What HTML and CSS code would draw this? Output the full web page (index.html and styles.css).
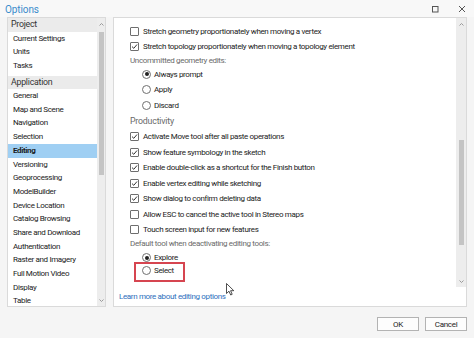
FILE: index.html
```html
<!doctype html>
<html lang="en">
  <head>
    <meta charset="UTF-8" />
    <meta name="viewport" content="width=device-width, initial-scale=1.0" />
    <title>Options</title>
    <link rel="stylesheet" href="styles.css">
  </head>
  <body>
    <div class="dialog">
      <div class="titlebar">
        <span class="title">Options</span>
        <div class="window-buttons">
          <svg width="8" height="8" viewBox="0 0 8 8"><rect x="1.5" y="1.5" width="5.5" height="5.5" fill="none" stroke="#555" /></svg>
          <svg width="8" height="8" viewBox="0 0 8 8"><path d="M1 1 L7 7 M7 1 L1 7" stroke="#555" stroke-width="1" /></svg>
        </div>
      </div>

      <div class="main">
        <!-- category list -->
        <div class="nav panel">
          <div class="nav-list">
            <div class="nav-header">Project</div>
            <div class="nav-item">Current Settings</div>
            <div class="nav-item">Units</div>
            <div class="nav-item">Tasks</div>
            <div class="nav-header nav-header-gap">Application</div>
            <div class="nav-item">General</div>
            <div class="nav-item">Map and Scene</div>
            <div class="nav-item">Navigation</div>
            <div class="nav-item">Selection</div>
            <div class="nav-item selected">Editing</div>
            <div class="nav-item">Versioning</div>
            <div class="nav-item">Geoprocessing</div>
            <div class="nav-item">ModelBuilder</div>
            <div class="nav-item">Device Location</div>
            <div class="nav-item">Catalog Browsing</div>
            <div class="nav-item">Share and Download</div>
            <div class="nav-item">Authentication</div>
            <div class="nav-item">Raster and Imagery</div>
            <div class="nav-item">Full Motion Video</div>
            <div class="nav-item">Display</div>
            <div class="nav-item">Table</div>
          </div>
          <div class="scrollbar scrollbar-narrow">
            <div class="arrow"><svg width="5" height="3" viewBox="0 0 5 3"><path d="M0.5 2.5 L2.5 0.5 L4.5 2.5" fill="none" stroke="#9a9a9a" /></svg></div>
            <div class="thumb" style="margin-top: 2px; height: 143px"></div>
            <div class="spacer"></div>
            <div class="arrow"><svg width="5" height="3" viewBox="0 0 5 3"><path d="M0.5 0.5 L2.5 2.5 L4.5 0.5" fill="none" stroke="#9a9a9a" /></svg></div>
          </div>
        </div>

        <!-- editing options -->
        <div class="content panel">
          <div class="content-body">
            <div class="scroll-area">
              <div class="row row-check"><span class="checkbox"></span>Stretch geometry proportionately when moving a vertex</div>
              <div class="row row-check"><span class="checkbox checked"><svg width="7" height="7" viewBox="0 0 7 7"><path d="M1 3.6 L2.8 5.3 L6 1.5" fill="none" stroke="#333" stroke-width="1" /></svg></span>Stretch topology proportionately when moving a topology element</div>
              <div class="note note-first">Uncommitted geometry edits:</div>
              <div class="row row-radio"><span class="radio on"></span>Always prompt</div>
              <div class="row row-radio"><span class="radio"></span>Apply</div>
              <div class="row row-radio"><span class="radio"></span>Discard</div>

              <div class="section-title">Productivity</div>
              <div class="row row-check"><span class="checkbox checked"><svg width="7" height="7" viewBox="0 0 7 7"><path d="M1 3.6 L2.8 5.3 L6 1.5" fill="none" stroke="#333" stroke-width="1" /></svg></span>Activate Move tool after all paste operations</div>
              <div class="row row-check"><span class="checkbox checked"><svg width="7" height="7" viewBox="0 0 7 7"><path d="M1 3.6 L2.8 5.3 L6 1.5" fill="none" stroke="#333" stroke-width="1" /></svg></span>Show feature symbology in the sketch</div>
              <div class="row row-check"><span class="checkbox checked"><svg width="7" height="7" viewBox="0 0 7 7"><path d="M1 3.6 L2.8 5.3 L6 1.5" fill="none" stroke="#333" stroke-width="1" /></svg></span>Enable double-click as a shortcut for the Finish button</div>
              <div class="row row-check"><span class="checkbox checked"><svg width="7" height="7" viewBox="0 0 7 7"><path d="M1 3.6 L2.8 5.3 L6 1.5" fill="none" stroke="#333" stroke-width="1" /></svg></span>Enable vertex editing while sketching</div>
              <div class="row row-check"><span class="checkbox checked"><svg width="7" height="7" viewBox="0 0 7 7"><path d="M1 3.6 L2.8 5.3 L6 1.5" fill="none" stroke="#333" stroke-width="1" /></svg></span>Show dialog to confirm deleting data</div>
              <div class="row row-check"><span class="checkbox"></span>Allow ESC to cancel the active tool in Stereo maps</div>
              <div class="row row-check"><span class="checkbox"></span>Touch screen input for new features</div>
              <div class="note note-default">Default tool when deactivating editing tools:</div>
              <div class="row row-radio row-tight"><span class="radio on"></span>Explore</div>
              <div class="row row-radio row-tight"><span class="radio"></span>Select</div>
            </div>
            <div class="scrollbar scrollbar-wide">
              <div class="arrow"><svg width="5" height="3" viewBox="0 0 5 3"><path d="M0.5 2.5 L2.5 0.5 L4.5 2.5" fill="none" stroke="#9a9a9a" /></svg></div>
              <div class="thumb" style="margin-top: 110px; height: 105px"></div>
              <div class="spacer"></div>
              <div class="arrow"><svg width="5" height="3" viewBox="0 0 5 3"><path d="M0.5 0.5 L2.5 2.5 L4.5 0.5" fill="none" stroke="#9a9a9a" /></svg></div>
            </div>
          </div>
          <div class="content-footer">
            <a class="help-link" href="#">Learn more about editing options</a>
          </div>

          <div class="highlight-box"></div>
          <svg class="cursor" width="9" height="13" viewBox="0 0 9 13">
            <path d="M0.5 0.5 L0.5 10.5 L3 8.2 L4.7 12 L6.2 11.3 L4.6 7.7 L7.8 7.7 Z" fill="#fff" stroke="#222" stroke-width="0.8" stroke-linejoin="round" />
          </svg>
        </div>
      </div>

      <div class="footer">
        <button class="button">OK</button>
        <button class="button">Cancel</button>
      </div>
    </div>
  </body>
</html>
```

FILE: styles.css
```css
* {
  margin: 0;
  padding: 0;
  box-sizing: border-box;
}

body {
  font-family: Roboto, "Noto Sans", sans-serif;
  font-size: 8px;
  letter-spacing: -0.35px;
  color: #1b1b1b;
  background: #f5f5f5;
}

.dialog {
  width: 474px;
  height: 338px;
  background: #f5f5f5;
  display: flex;
  flex-direction: column;
}

.titlebar {
  height: 17px;
  display: flex;
  align-items: center;
  justify-content: space-between;
  padding: 0 8px 0 5px;
  background: #f8f8f8;
}

.title {
  font-size: 10px;
  letter-spacing: -0.1px;
  color: #3a8ccc;
  margin-top: 2px;
}

.window-buttons {
  display: flex;
  gap: 19px;
  align-items: center;
  margin-top: 1px;
}

.main {
  display: flex;
  gap: 7px;
  height: 290px;
  margin: 0 7px;
}

.panel {
  background: #fff;
  border: 1px solid #dadada;
}

/* category list */

.nav {
  width: 99px;
  display: flex;
  overflow: hidden;
}

.nav-list {
  width: 89px;
  display: flex;
  flex-direction: column;
}

.nav-header {
  flex: none;
  height: 13.5px;
  line-height: 13.5px;
  padding-left: 3px;
  font-size: 8.8px;
  letter-spacing: -0.25px;
  color: #333;
  background: #ebebeb;
}

.nav-header-gap {
  margin-top: 3px;
}

.nav-item {
  flex: none;
  height: 13.7px;
  line-height: 13.7px;
  padding-left: 5px;
  white-space: nowrap;
}

.nav-item.selected {
  background: #9fcff3;
  font-weight: 700;
}

/* scrollbars */

.scrollbar {
  display: flex;
  flex-direction: column;
  align-items: center;
  background: #ededed;
}

.scrollbar-narrow {
  width: 8px;
}

.scrollbar-wide {
  width: 10px;
}

.arrow {
  height: 12px;
  display: flex;
  align-items: center;
  justify-content: center;
}

.thumb {
  width: 5px;
  background: #c4c4c4;
  flex: none;
}

.spacer {
  flex: 1;
}

/* editing options */

.content {
  width: 354px;
  display: flex;
  flex-direction: column;
  position: relative;
}

.content-body {
  height: 269px;
  display: flex;
}

.scroll-area {
  flex: 1;
  padding-top: 5.25px;
  overflow: hidden;
}

.row {
  display: flex;
  align-items: center;
  height: 15.5px;
  white-space: nowrap;
}

.row-check {
  padding-left: 16px;
}

.row-radio {
  padding-left: 28px;
}

.row-tight {
  height: 13px;
}

.checkbox {
  width: 9px;
  height: 9px;
  border: 1px solid #6e6e6e;
  border-radius: 1px;
  background: #fff;
  margin-right: 4px;
  display: flex;
  align-items: center;
  justify-content: center;
}

.radio {
  width: 9px;
  height: 9px;
  border: 1px solid #707070;
  border-radius: 50%;
  background: #fff;
  margin-right: 3px;
  display: flex;
  align-items: center;
  justify-content: center;
}

.radio.on::after {
  content: "";
  width: 4px;
  height: 4px;
  border-radius: 50%;
  background: #222;
}

.note {
  padding-left: 16px;
  color: #6a6a6a;
  white-space: nowrap;
}

.note-first {
  height: 10px;
  line-height: 10px;
  margin-top: 2px;
}

.note-default {
  height: 14px;
  line-height: 14px;
}

.section-title {
  height: 16px;
  line-height: 16px;
  padding-left: 16px;
  font-size: 8.8px;
  letter-spacing: -0.2px;
  color: #6a6a6a;
}

.content-footer {
  flex: 1;
  display: flex;
  align-items: center;
  padding-left: 5px;
}

.help-link {
  color: #2e6fbd;
  text-decoration: none;
}

/* annotation drawn over the screenshot */
.highlight-box {
  position: absolute;
  left: 20px;
  top: 244px;
  width: 51px;
  height: 20px;
  border: 2px solid #d64550;
}

.cursor {
  position: absolute;
  left: 112px;
  top: 265px;
}

/* dialog buttons */

.footer {
  flex: 1;
  display: flex;
  justify-content: flex-end;
  align-items: flex-start;
  gap: 6px;
  padding: 10px 7px 0 0;
}

.button {
  width: 42px;
  height: 14px;
  font-family: Roboto, "Noto Sans", sans-serif;
  font-size: 8px;
  letter-spacing: -0.3px;
  color: #1e1e1e;
  background: #fdfdfd;
  border: 1px solid #b3b3b3;
}
```
